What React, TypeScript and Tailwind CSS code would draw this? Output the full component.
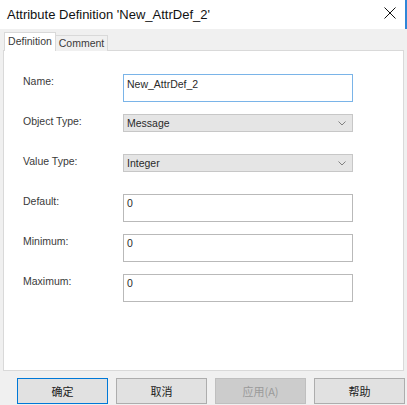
import React from "react";

const font = { fontFamily: '"Liberation Sans", Arial, sans-serif' };

function Label({ text }: { text: string }) {
  return (
    <div className="w-[100px] shrink-0 text-[10.5px] leading-[14px] text-[#3a3a3a]">{text}</div>
  );
}

function TextBox({ value, focused }: { value: string; focused?: boolean }) {
  return (
    <div
      className={
        focused
          ? "w-[230px] h-[28px] border border-[#7ab4e8] bg-white pl-[3px] pt-[2px] text-[10.5px] leading-[14px] text-[#2a2a2a]"
          : "w-[230px] h-[28px] border border-[#b9b9b9] bg-white pl-[3px] pt-[0.5px] text-[10.5px] leading-[14px] text-[#2a2a2a]"
      }
    >
      {value}
    </div>
  );
}

function Select({ value }: { value: string }) {
  return (
    <div className="w-[230px] h-[18px] border border-[#c7c7c7] bg-[#e5e5e5] flex items-center justify-between pl-[3px] pr-[6px] text-[10.5px] leading-[14px] text-[#2a2a2a]">
      <span>{value}</span>
      <svg width="8" height="5" viewBox="0 0 8 5" fill="none">
        <path d="M0.5 0.5 L4 4 L7.5 0.5" stroke="#808080" strokeWidth="1" />
      </svg>
    </div>
  );
}

export default function App() {
  return (
    <div className="w-[407px] h-[405px] overflow-hidden bg-[#f0f0f0] flex flex-col" style={font}>
      {/* Title bar */}
      <div className="h-[29px] shrink-0 bg-white border-r-2 border-[#2f86d8] flex items-center justify-between pl-[7px] pr-[9px]">
        <span className="text-[13px] text-[#111] leading-none">Attribute Definition 'New_AttrDef_2'</span>
        <svg width="12" height="12" viewBox="0 0 12 12" fill="none" className="mb-[4px]">
          <path d="M0.5 0.5 L11.5 11.5 M11.5 0.5 L0.5 11.5" stroke="#111" strokeWidth="1" />
        </svg>
      </div>

      {/* Tabs */}
      <div className="pt-[3px] pl-[4px] flex items-end relative z-10 -mb-px h-[22px] shrink-0">
        <div className="h-[19px] w-[52px] bg-white border border-b-0 border-[#d9d9d9] flex items-center justify-center text-[10.5px] text-[#3a3a3a]">
          Definition
        </div>
        <div className="h-[16px] w-[52px] bg-[#f0f0f0] border border-l-0 border-b-0 border-[#d9d9d9] flex items-center justify-center text-[10.5px] text-[#3a3a3a]">
          Comment
        </div>
      </div>

      {/* Panel */}
      <div className="ml-[3px] mr-[3px] h-[321px] shrink-0 bg-white border border-[#d9d9d9] pl-[19px] pt-[23px] flex flex-col">
        <div className="flex">
          <Label text="Name:" />
          <TextBox value="New_AttrDef_2" focused />
        </div>
        <div className="flex mt-[12px]">
          <Label text="Object Type:" />
          <Select value="Message" />
        </div>
        <div className="flex mt-[22px]">
          <Label text="Value Type:" />
          <Select value="Integer" />
        </div>
        <div className="flex mt-[22px]">
          <Label text="Default:" />
          <TextBox value="0" />
        </div>
        <div className="flex mt-[12px]">
          <Label text="Minimum:" />
          <TextBox value="0" />
        </div>
        <div className="flex mt-[12px]">
          <Label text="Maximum:" />
          <TextBox value="0" />
        </div>
      </div>

      {/* Buttons */}
      <div
        className="flex gap-[8px] pl-[17px] pt-[7px] text-[11px]"
        style={{ fontFamily: '"Noto Sans CJK SC", "Liberation Sans", sans-serif' }}
      >
        <div className="w-[91px] h-[26px] border border-[#0078d7] bg-[#e1e1e1] flex items-center justify-center text-[#222]">
          确定
        </div>
        <div className="w-[91px] h-[26px] border border-[#adadad] bg-[#e1e1e1] flex items-center justify-center text-[#222]">
          取消
        </div>
        <div className="w-[91px] h-[26px] border border-[#bfbfbf] bg-[#cccccc] flex items-center justify-center text-[#9a9a9a]">
          应用(A)
        </div>
        <div className="w-[91px] h-[26px] border border-[#adadad] bg-[#e1e1e1] flex items-center justify-center text-[#222]">
          帮助
        </div>
      </div>
    </div>
  );
}
